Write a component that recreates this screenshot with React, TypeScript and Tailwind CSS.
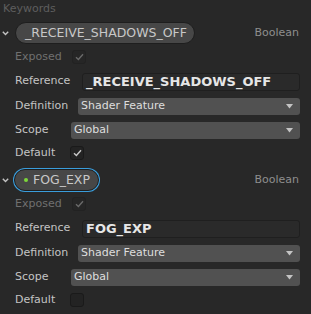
import React from 'react';

type Keyword = {
  name: string;
  selected?: boolean;
  defaultOn: boolean;
};

const keywords: Keyword[] = [
  { name: '_RECEIVE_SHADOWS_OFF', defaultOn: true },
  { name: 'FOG_EXP', selected: true, defaultOn: false },
];

const font = { fontFamily: '"DejaVu Sans", Verdana, sans-serif' };

const Chevron = () => (
  <svg width="7" height="5" viewBox="0 0 7 5" className="shrink-0">
    <path d="M0.8 0.8 L3.5 3.6 L6.2 0.8" fill="none" stroke="#c4c4c4" strokeWidth="1.4" />
  </svg>
);

const Check = ({ on, disabled }: { on: boolean; disabled?: boolean }) => (
  <div
    className={`w-[14px] h-[14px] rounded-[3px] border flex items-center justify-center ${
      disabled ? 'bg-[#262626] border-[#222222]' : 'bg-[#232323] border-[#1a1a1a]'
    }`}
  >
    {on && (
      <svg width="9" height="8" viewBox="0 0 9 8">
        <path
          d="M1 4.2 L3.4 6.4 L8 1.2"
          fill="none"
          stroke={disabled ? '#6a6a6a' : '#c8c8c8'}
          strokeWidth="1.4"
        />
      </svg>
    )}
  </div>
);

const Dropdown = ({ value }: { value: string }) => (
  <div className="flex-1 h-[17px] rounded-[3px] bg-[#515151] flex items-center justify-between pl-[3px] pr-[7px] text-[11px] text-[#dedede]">
    <span>{value}</span>
    <svg width="7" height="5" viewBox="0 0 7 5">
      <path d="M0 0 L7 0 L3.5 4.5 Z" fill="#c4c4c4" />
    </svg>
  </div>
);

const Row = ({
  label,
  labelW,
  h = 'h-6',
  dim,
  children,
}: {
  label: string;
  labelW: string;
  h?: string;
  dim?: boolean;
  children: React.ReactNode;
}) => (
  <div className={`flex items-center pl-[15px] pr-[11px] ${h}`}>
    <span className={`${labelW} shrink-0 text-[11px] ${dim ? 'text-[#707070]' : 'text-[#c4c4c4]'}`}>
      {label}
    </span>
    {children}
  </div>
);

const KeywordBlock = ({ kw, first }: { kw: Keyword; first: boolean }) => (
  <div className={first ? '' : 'mt-[4px]'}>
    {/* header: chevron + pill + type */}
    <div className="h-6 flex items-center pl-[2px] pr-[12px]">
      <Chevron />
      <div
        className={`ml-[5px] h-[22px] rounded-full bg-[#474747] border border-[#1e1e1e] flex items-center text-[12.5px] text-[#c8c8c8] ${
          kw.selected ? 'ml-[5px] ring-1 ring-[#3a9ddb] pl-[9px] pr-[8px]' : 'ml-[6px] pl-[9px] pr-[7px]'
        }`}
      >
        {kw.selected && <span className="w-[4px] h-[4px] rounded-full bg-[#7dd63a] mr-[5px]" />}
        {kw.name}
      </div>
      <span className="ml-auto text-[11px] text-[#8e8e8e]">Boolean</span>
    </div>

    <Row label="Exposed" labelW="w-[57px]" dim>
      <Check on disabled />
    </Row>
    <Row label="Reference" labelW="w-[67px]" h="h-[25px]">
      <div className="flex-1 h-[18px] rounded-[3px] bg-[#2a2a2a] border border-[#1f1f1f] flex items-center pl-[3px] text-[13px] font-bold text-[#e6e6e6]">
        {kw.name}
      </div>
    </Row>
    <Row label="Definition" labelW="w-[63px]">
      <Dropdown value="Shader Feature" />
    </Row>
    <Row label="Scope" labelW="w-[56px]">
      <Dropdown value="Global" />
    </Row>
    <Row label="Default" labelW="w-[55px]" h="h-[22px]">
      <Check on={kw.defaultOn} />
    </Row>
  </div>
);

export default function App() {
  return (
    <div className="w-[311px] h-[314px] bg-[#282828] overflow-hidden" style={font}>
      <div className="h-[21px] pl-[3px] pt-[1px] text-[11px] text-[#5e5e5e]">Keywords</div>
      {keywords.map((kw, i) => (
        <KeywordBlock key={kw.name} kw={kw} first={i === 0} />
      ))}
    </div>
  );
}
